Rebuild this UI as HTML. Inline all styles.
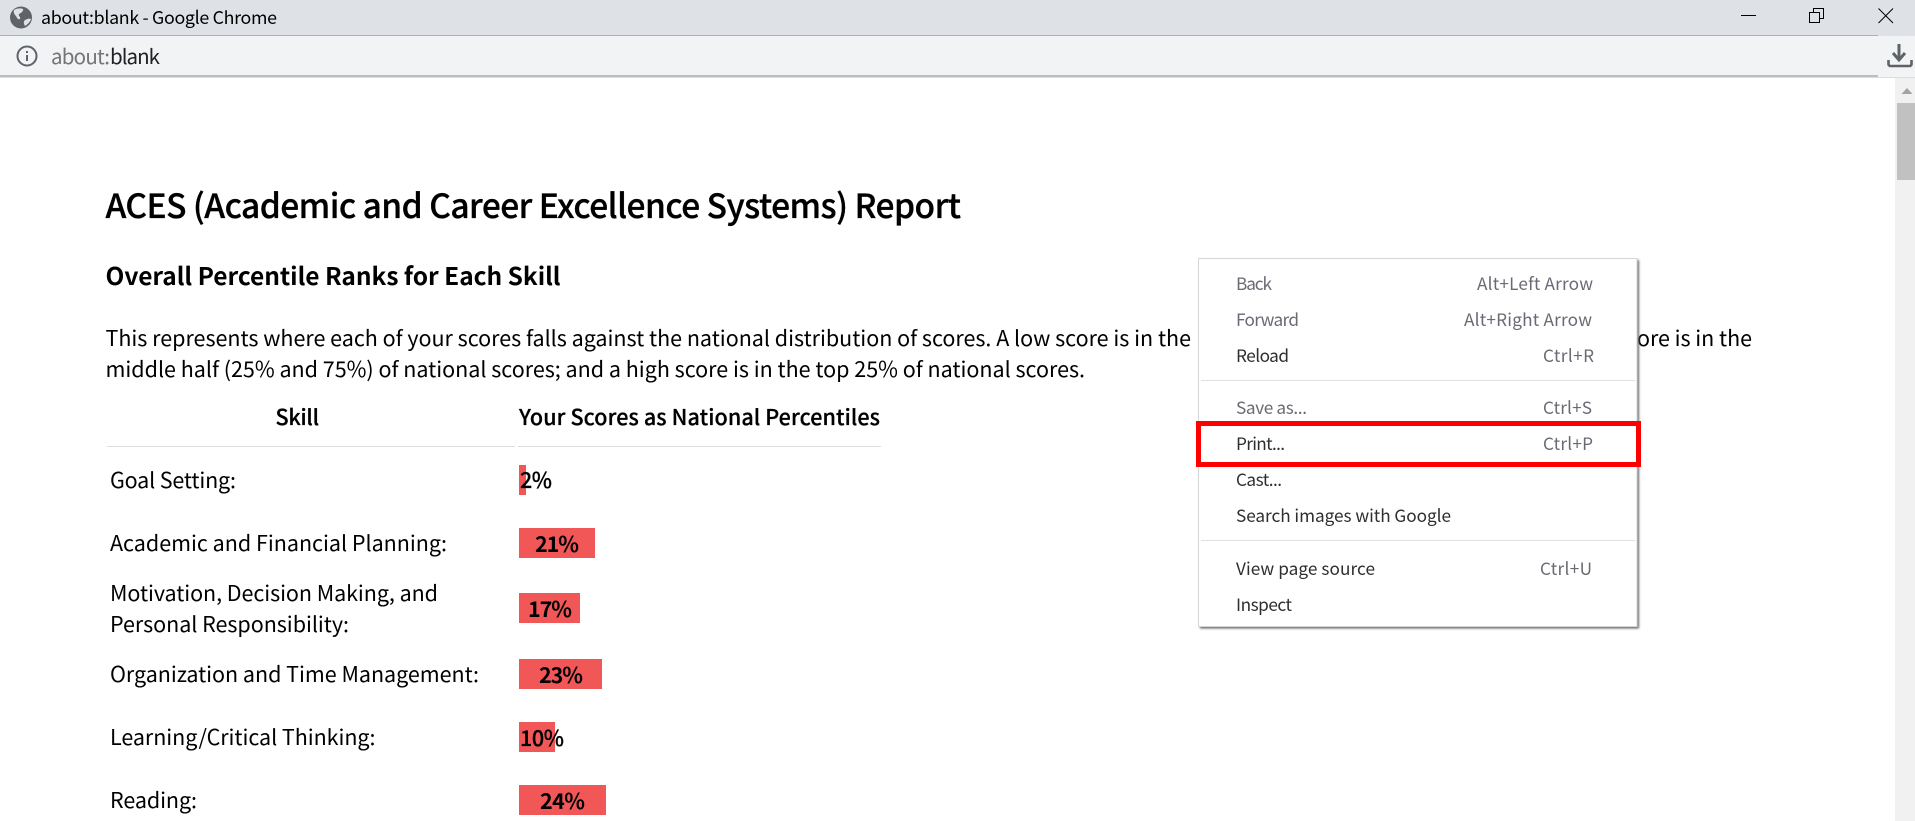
<!DOCTYPE html>
<html lang="en">
<head>
<meta charset="utf-8">
<title>about:blank - Google Chrome</title>
<style>
html,body{margin:0;padding:0;background:#fff;width:1915px;height:821px;overflow:hidden}
svg{display:block}
text{font-family:"Noto Sans CJK SC","Noto Sans CJK JP","Liberation Sans",sans-serif;fill:#000}
.b{font-size:21.5px}
.s{font-size:21.5px;font-weight:500;stroke:#000;stroke-width:.25px}
.p{font-size:21.5px;font-weight:700}
.m{font-size:17.2px;fill:#2e2e2e}
.d{font-size:17.2px;fill:#6a6a74}
</style>
</head>
<body>
<svg width="1915" height="821" viewBox="0 0 1915 821" xmlns="http://www.w3.org/2000/svg">
<defs><filter id="sh" x="-5%" y="-5%" width="110%" height="110%"><feGaussianBlur stdDeviation="1"/></filter></defs>
<rect width="1915" height="821" fill="#fff"/>

<!-- Title bar -->
<rect width="1915" height="35" fill="#dee1e6"/>
<rect y="35" width="1878" height="1" fill="#b0b0b0"/>
<rect x="1878" y="35" width="37" height="1" fill="#dee1e6"/>
<circle cx="21" cy="17.500" r="11" fill="#5f6368"/>
<path d="M14 10c3-2 7-2 9-1 1 2-2 4-4 5-1 2 2 3 1 5-2 1-3-1-4-3-1-1-3-3-2-6zM31 19c-1 3-3 5-6 7-1-2-2-4 0-6 2-1 4-2 6-1z" fill="#dee1e6"/>
<text x="41" y="24" font-size="17.800" textLength="236" lengthAdjust="spacing">about:blank - Google Chrome</text>
<rect x="1741" y="15" width="15" height="1" fill="#000"/>
<path d="M1813.500 12V8.500h10v10H1820M1809.500 12.500h10v10h-10z" fill="none" stroke="#000" stroke-width="1"/>
<path d="M1878.500 8.500l14.500 14.500M1893 8.500l-14.500 14.500" fill="none" stroke="#000" stroke-width="1"/>

<!-- Address bar -->
<rect y="36" width="1915" height="39" fill="#f1f3f4"/>
<rect y="75" width="1878" height="2" fill="#bdbdbd"/>
<rect x="1878" y="75" width="37" height="2" fill="#f1f3f4"/>
<rect y="77" width="1915" height="1" fill="#dcdcdc"/>
<circle cx="27" cy="56" r="9.500" fill="none" stroke="#5f6368" stroke-width="2"/>
<rect x="26" y="55" width="2" height="6" fill="#5f6368"/>
<rect x="26" y="51" width="2" height="2" fill="#5f6368"/>
<text x="51" y="64" font-size="20.500" textLength="59" lengthAdjust="spacing" style="fill:#757575">about:</text>
<text x="110" y="64" font-size="20.500" textLength="50" lengthAdjust="spacing" style="fill:#202124">blank</text>
<path d="M1899 44v15M1893 53l6 7 6-7" fill="none" stroke="#5f6368" stroke-width="3"/>
<path d="M1888.500 60v4a2 2 0 0 0 2 2h19a2 2 0 0 0 2-2v-4" fill="none" stroke="#5f6368" stroke-width="2.600"/>

<!-- Scrollbar -->
<rect x="1895" y="78" width="20" height="743" fill="#f1f1f1"/>
<path d="M1907 88l5.500 6h-11z" fill="#a3a3a3"/>
<rect x="1897" y="103" width="18" height="77" fill="#c1c1c1"/>

<!-- Content -->
<text x="105.500" y="218" font-size="33.500" font-weight="500" stroke="#000" stroke-width=".3" textLength="855.500" lengthAdjust="spacing">ACES (Academic and Career Excellence Systems) Report</text>
<text x="105.500" y="285" font-size="24.500" font-weight="700" textLength="455" lengthAdjust="spacing">Overall Percentile Ranks for Each Skill</text>
<text class="b" x="105.500" y="346" textLength="1085.500" lengthAdjust="spacing">This represents where each of your scores falls against the national distribution of scores. A low score is in the</text>
<text class="b" x="1637" y="346" textLength="115" lengthAdjust="spacing">ore is in the</text>
<text class="b" x="105.500" y="377" textLength="979.500" lengthAdjust="spacing">middle half (25% and 75%) of national scores; and a high score is in the top 25% of national scores.</text>

<!-- Table head -->
<text class="s" x="275.500" y="425" textLength="43.500" lengthAdjust="spacing">Skill</text>
<text class="s" x="519" y="425" textLength="361" lengthAdjust="spacing">Your Scores as National Percentiles</text>
<rect x="107" y="446" width="408" height="1" fill="#dddddd"/>
<rect x="518" y="446" width="363" height="1" fill="#dddddd"/>

<!-- Rows -->
<text class="b" x="110" y="488" textLength="126" lengthAdjust="spacing">Goal Setting:</text>
<rect x="519" y="465" width="7" height="30" fill="#f15757"/>
<text class="s" x="520" y="488" textLength="32" lengthAdjust="spacing">2%</text>

<text class="b" x="110" y="551" textLength="337" lengthAdjust="spacing">Academic and Financial Planning:</text>
<rect x="519" y="528" width="76" height="30" fill="#f15757"/>
<text class="p" x="535" y="552" textLength="44" lengthAdjust="spacing">21%</text>

<text class="b" x="110" y="601" textLength="328" lengthAdjust="spacing">Motivation, Decision Making, and</text>
<text class="b" x="110" y="632" textLength="239" lengthAdjust="spacing">Personal Responsibility:</text>
<rect x="519" y="593" width="61" height="30" fill="#f15757"/>
<text class="p" x="528" y="617" textLength="44" lengthAdjust="spacing">17%</text>

<text class="b" x="110" y="682" textLength="369" lengthAdjust="spacing">Organization and Time Management:</text>
<rect x="519" y="659" width="83" height="30" fill="#f15757"/>
<text class="p" x="539" y="683" textLength="44" lengthAdjust="spacing">23%</text>

<text class="b" x="110" y="745" textLength="265.500" lengthAdjust="spacing">Learning/Critical Thinking:</text>
<rect x="519" y="722" width="36" height="30" fill="#f15757"/>
<text class="s" x="520" y="746" textLength="44" lengthAdjust="spacing">10%</text>

<text class="b" x="110" y="808" textLength="87" lengthAdjust="spacing">Reading:</text>
<rect x="519" y="785" width="87" height="30" fill="#f15757"/>
<text class="p" x="540" y="809" textLength="45" lengthAdjust="spacing">24%</text>

<!-- Context menu -->
<rect x="1200" y="260" width="439" height="368.500" fill="#6a6a6a" filter="url(#sh)"/>
<rect x="1198.500" y="258.500" width="438.500" height="368" fill="#fff" stroke="#d6d6d6" stroke-width="1"/>
<text class="d" x="1236" y="290" textLength="36" lengthAdjust="spacing">Back</text>
<text class="d" x="1477" y="290" textLength="116" lengthAdjust="spacing">Alt+Left Arrow</text>
<text class="d" x="1236" y="326" textLength="63" lengthAdjust="spacing">Forward</text>
<text class="d" x="1464" y="326" textLength="128" lengthAdjust="spacing">Alt+Right Arrow</text>
<text class="m" x="1236" y="362" textLength="53" lengthAdjust="spacing">Reload</text>
<text class="d" x="1543" y="362" textLength="51" lengthAdjust="spacing">Ctrl+R</text>
<rect x="1201" y="380" width="434" height="1" fill="#e0e0e0"/>
<text class="d" x="1236" y="414" textLength="71" lengthAdjust="spacing">Save as...</text>
<text class="d" x="1543" y="414" textLength="49" lengthAdjust="spacing">Ctrl+S</text>
<text class="m" x="1236" y="450" textLength="49" lengthAdjust="spacing">Print...</text>
<text class="d" x="1543" y="450" textLength="50" lengthAdjust="spacing">Ctrl+P</text>
<text class="m" x="1236" y="486" textLength="46" lengthAdjust="spacing">Cast...</text>
<text class="m" x="1236" y="522" textLength="215" lengthAdjust="spacing">Search images with Google</text>
<rect x="1201" y="540" width="434" height="1" fill="#e0e0e0"/>
<text class="m" x="1236" y="575" textLength="139" lengthAdjust="spacing">View page source</text>
<text class="d" x="1540" y="575" textLength="52" lengthAdjust="spacing">Ctrl+U</text>
<text class="m" x="1236" y="611" textLength="56" lengthAdjust="spacing">Inspect</text>

<!-- Red highlight -->
<rect x="1198.500" y="423.500" width="440" height="41" fill="none" stroke="#ff0000" stroke-width="5"/>
</svg>
</body>
</html>
